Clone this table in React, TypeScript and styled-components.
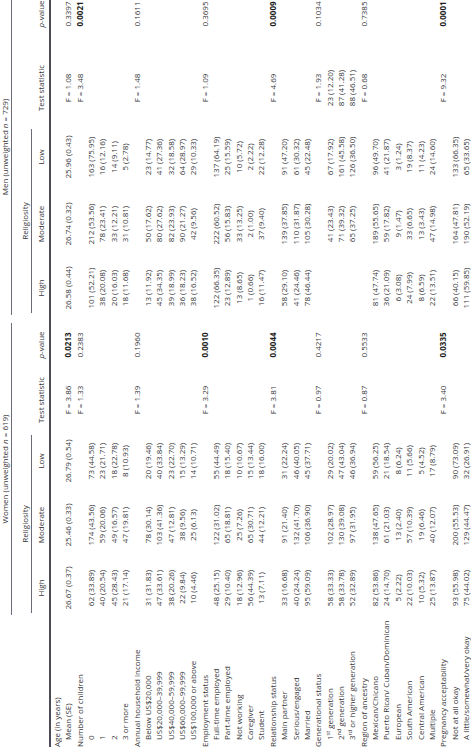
import React from "react";
import styled, { createGlobalStyle } from "styled-components";

const GlobalStyle = createGlobalStyle`
  html, body {
    margin: 0;
    padding: 0;
    background: #ffffff;
  }
  body {
    width: 474px;
    height: 747px;
    overflow: hidden;
  }
`;

const Page = styled.div`
  width: 474px;
  height: 747px;
  overflow: hidden;
  background: #ffffff;
`;

// the whole table is printed sideways, so it is laid out upright and turned
const Turned = styled.div`
  width: 747px;
  height: 474px;
  transform-origin: top left;
  transform: translate(0, 747px) rotate(-90deg);
`;

const Table = styled.table`
  width: 772px;
  border-collapse: collapse;
  table-layout: fixed;
  font-family: "Open Sans", "Noto Sans", sans-serif;
  font-size: 8px;
  color: #353539;
`;

const GroupRow = styled.tr`
  height: 12px;
`;

const SubRow = styled.tr`
  height: 20px;
`;

const HeadRow = styled.tr`
  height: 18px;
`;

const Cell = styled.td`
  padding: 0;
  text-align: center;
  white-space: nowrap;
  vertical-align: bottom;
`;

const Spanner = styled.div<{ $pad: number }>`
  margin: 0 ${(p) => p.$pad}px;
  padding-bottom: 2px;
  line-height: 9px;
  border-bottom: 1.5px solid #6c6c78;
`;

const HeadCell = styled.th`
  padding: 0 0 3px;
  font-weight: 400;
  text-align: center;
  white-space: nowrap;
  vertical-align: bottom;
  line-height: 10px;
  border-bottom: 2px solid #4c4c56;
`;

const BodyRow = styled.tr`
  height: 11.36px;
`;

const Label = styled.td<{ $indent: boolean }>`
  padding: 0 0 0 ${(p) => (p.$indent ? 7 : 0)}px;
  height: 11.36px;
  line-height: 11.36px;
  white-space: nowrap;
  text-align: left;
  overflow: hidden;
`;

const Sup = styled.sup`
  font-size: 5.5px;
  line-height: 0;
  vertical-align: 3px;
`;

const Value = styled.td<{ $bold?: boolean }>`
  padding: 0;
  height: 11.36px;
  line-height: 11.36px;
  white-space: nowrap;
  text-align: center;
  font-weight: ${(p) => (p.$bold ? 700 : 400)};
  color: ${(p) => (p.$bold ? "#1e1e22" : "inherit")};
`;

const widths = [128, 62, 64, 64, 58, 52, 62, 66, 68, 70, 78];

type Row = { label: React.ReactNode; sub?: boolean; w?: string[]; m?: string[] };

const e = ["", "", "", "", ""];

const rows: Row[] = [
  { label: "Age (in years)" },
  { label: "Mean (SE)", sub: true, w: ["26.67 (0.37)", "25.46 (0.33)", "26.79 (0.54)", "F = 3.86", "*0.0213"], m: ["26.58 (0.44)", "26.74 (0.32)", "25.96 (0.43)", "F = 1.08", "0.3397"] },
  { label: "Number of children", w: ["", "", "", "F = 1.33", "0.2383"], m: ["", "", "", "F = 3.48", "*0.0021"] },
  { label: "0", sub: true, w: ["62 (33.89)", "174 (43.56)", "73 (44.58)", "", ""], m: ["101 (52.21)", "212 (53.56)", "163 (75.95)", "", ""] },
  { label: "1", sub: true, w: ["40 (20.54)", "59 (20.06)", "23 (21.71)", "", ""], m: ["38 (20.08)", "78 (23.41)", "16 (12.16)", "", ""] },
  { label: "2", sub: true, w: ["45 (28.43)", "49 (16.57)", "18 (22.78)", "", ""], m: ["20 (16.03)", "33 (12.21)", "14 (9.11)", "", ""] },
  { label: "3 or more", sub: true, w: ["21 (17.14)", "47 (19.81)", "8 (10.93)", "", ""], m: ["18 (11.68)", "31 (10.81)", "5 (2.78)", "", ""] },
  { label: "Annual household income", w: ["", "", "", "F = 1.39", "0.1960"], m: ["", "", "", "F = 1.48", "0.1611"] },
  { label: "Below US$20,000", sub: true, w: ["31 (31.83)", "78 (30.14)", "20 (19.46)", "", ""], m: ["13 (11.92)", "50 (17.62)", "23 (14.77)", "", ""] },
  { label: "US$20,000–39,999", sub: true, w: ["47 (33.61)", "103 (41.36)", "40 (33.84)", "", ""], m: ["45 (34.35)", "80 (27.62)", "41 (27.36)", "", ""] },
  { label: "US$40,000–59,999", sub: true, w: ["38 (20.26)", "47 (12.81)", "23 (22.70)", "", ""], m: ["39 (18.99)", "82 (23.93)", "32 (18.58)", "", ""] },
  { label: "US$60,000–99,999", sub: true, w: ["22 (9.84)", "38 (9.56)", "15 (13.29)", "", ""], m: ["36 (18.23)", "90 (21.27)", "64 (28.97)", "", ""] },
  { label: "US$100,000 or above", sub: true, w: ["10 (4.46)", "25 (6.13)", "14 (10.71)", "", ""], m: ["38 (16.52)", "42 (9.56)", "29 (10.33)", "", ""] },
  { label: "Employment status", w: ["", "", "", "F = 3.29", "*0.0010"], m: ["", "", "", "F = 1.09", "0.3695"] },
  { label: "Full-time employed", sub: true, w: ["48 (25.15)", "122 (31.02)", "55 (44.49)", "", ""], m: ["122 (66.35)", "222 (60.52)", "137 (64.19)", "", ""] },
  { label: "Part-time employed", sub: true, w: ["29 (10.40)", "65 (18.81)", "18 (15.40)", "", ""], m: ["23 (12.89)", "56 (15.83)", "25 (15.59)", "", ""] },
  { label: "Not working", sub: true, w: ["18 (12.96)", "25 (7.26)", "10 (10.67)", "", ""], m: ["13 (8.65)", "33 (13.25)", "10 (5.72)", "", ""] },
  { label: "Caregiver", sub: true, w: ["56 (44.39)", "65 (30.71)", "15 (13.44)", "", ""], m: ["1 (0.66)", "2 (1.00)", "2 (2.22)", "", ""] },
  { label: "Student", sub: true, w: ["13 (7.11)", "44 (12.21)", "18 (16.00)", "", ""], m: ["16 (11.47)", "37 (9.40)", "22 (12.28)", "", ""] },
  { label: "Relationship status", w: ["", "", "", "F = 3.81", "*0.0044"], m: ["", "", "", "F = 4.69", "*0.0009"] },
  { label: "Main partner", sub: true, w: ["33 (16.68)", "91 (21.40)", "31 (22.24)", "", ""], m: ["58 (29.10)", "139 (37.85)", "91 (47.20)", "", ""] },
  { label: "Serious/engaged", sub: true, w: ["40 (24.24)", "132 (41.70)", "46 (40.05)", "", ""], m: ["41 (24.46)", "110 (31.87)", "61 (30.32)", "", ""] },
  { label: "Married", sub: true, w: ["95 (59.09)", "106 (36.90)", "45 (37.71)", "", ""], m: ["78 (46.44)", "105 (30.28)", "45 (22.48)", "", ""] },
  { label: "Generational status", w: ["", "", "", "F = 0.97", "0.4217"], m: ["", "", "", "F = 1.93", "0.1034"] },
  { label: <>1<Sup>st</Sup> generation</>, sub: true, w: ["58 (33.33)", "102 (28.97)", "29 (20.02)", "", ""], m: ["", "41 (23.43)", "67 (17.92)", "23 (12.20)", ""] },
  { label: <>2<Sup>nd</Sup> generation</>, sub: true, w: ["58 (33.78)", "130 (39.08)", "47 (43.04)", "", ""], m: ["", "71 (39.32)", "161 (45.58)", "87 (41.28)", ""] },
  { label: <>3<Sup>rd</Sup> or higher generation</>, sub: true, w: ["52 (32.89)", "97 (31.95)", "46 (36.94)", "", ""], m: ["", "65 (37.25)", "126 (36.50)", "88 (46.51)", ""] },
  { label: "Region of ancestry", w: ["", "", "", "F = 0.87", "0.5533"], m: ["", "", "", "F = 0.68", "0.7385"] },
  { label: "Mexican/Chicano", sub: true, w: ["82 (53.86)", "138 (47.65)", "59 (56.25)", "", ""], m: ["81 (47.74)", "189 (55.65)", "96 (49.70)", "", ""] },
  { label: "Puerto Rican/ Cuban/Dominican", sub: true, w: ["24 (14.70)", "61 (21.03)", "21 (18.54)", "", ""], m: ["36 (21.09)", "59 (17.82)", "41 (21.87)", "", ""] },
  { label: "European", sub: true, w: ["5 (2.22)", "13 (2.40)", "8 (6.24)", "", ""], m: ["6 (3.08)", "9 (1.47)", "3 (1.24)", "", ""] },
  { label: "South American", sub: true, w: ["22 (10.03)", "57 (10.39)", "11 (5.66)", "", ""], m: ["24 (7.99)", "33 (6.65)", "19 (8.37)", "", ""] },
  { label: "Central American", sub: true, w: ["10 (5.32)", "19 (6.46)", "5 (4.52)", "", ""], m: ["8 (6.59)", "13 (3.43)", "11 (4.23)", "", ""] },
  { label: "Multiple", sub: true, w: ["25 (13.87)", "40 (12.07)", "17 (8.79)", "", ""], m: ["22 (13.51)", "47 (14.98)", "24 (14.60)", "", ""] },
  { label: "Pregnancy acceptability", w: ["", "", "", "F = 3.40", "*0.0335"], m: ["", "", "", "F = 9.32", "*0.0001"] },
  { label: "Not at all okay", sub: true, w: ["93 (55.98)", "200 (55.53)", "90 (73.09)", "", ""], m: ["66 (40.15)", "164 (47.81)", "133 (66.35)", "", ""] },
  { label: "A little/somewhat/very okay", sub: true, w: ["75 (44.02)", "129 (44.47)", "32 (26.91)", "", ""], m: ["111 (59.85)", "190 (52.19)", "65 (33.65)", "", ""] },
];

const headings = ["High", "Moderate", "Low", "Test statistic"];

function GroupHeads({ title }: { title: string }) {
  return (
    <>
      {headings.map((h) => (
        <HeadCell key={title + h}>{h}</HeadCell>
      ))}
      <HeadCell>
        <i>p</i>-value
      </HeadCell>
    </>
  );
}

export default function App() {
  return (
    <Page>
      <GlobalStyle />
      <Turned>
        <Table>
          <colgroup>
            {widths.map((w, i) => (
              <col key={i} style={{ width: w }} />
            ))}
          </colgroup>
          <thead>
            <GroupRow>
              <Cell />
              <Cell colSpan={5}>
                <Spanner $pad={4}>
                  Women (unweighted <i>n</i> = 619)
                </Spanner>
              </Cell>
              <Cell colSpan={5}>
                <Spanner $pad={4}>
                  Men (unweighted <i>n</i> = 729)
                </Spanner>
              </Cell>
            </GroupRow>
            <SubRow>
              <Cell />
              <Cell colSpan={3}>
                <Spanner $pad={6}>Religiosity</Spanner>
              </Cell>
              <Cell colSpan={2} />
              <Cell colSpan={3}>
                <Spanner $pad={6}>Religiosity</Spanner>
              </Cell>
              <Cell colSpan={2} />
            </SubRow>
            <HeadRow>
              <HeadCell />
              <GroupHeads title="w" />
              <GroupHeads title="m" />
            </HeadRow>
          </thead>
          <tbody>
            {rows.map((r, i) => (
              <BodyRow key={i}>
                <Label $indent={!!r.sub}>{r.label}</Label>
                {[...(r.w ?? e), ...(r.m ?? e)].map((v, j) => (
                  <Value key={j} $bold={v.startsWith("*")}>
                    {v.replace("*", "")}
                  </Value>
                ))}
              </BodyRow>
            ))}
          </tbody>
        </Table>
      </Turned>
    </Page>
  );
}
